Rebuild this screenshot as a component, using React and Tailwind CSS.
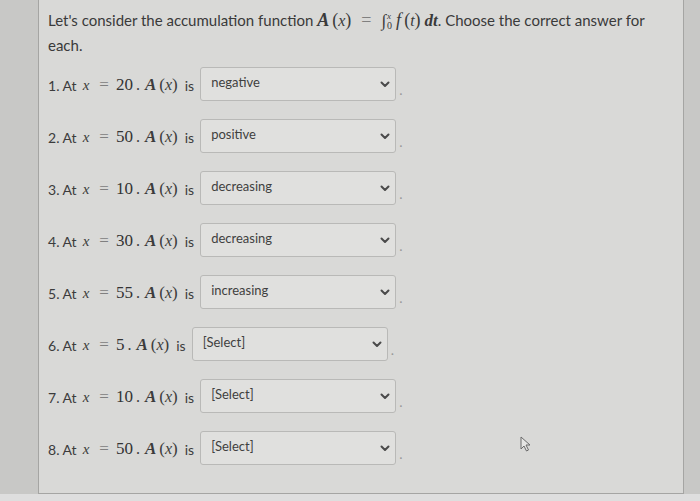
import React from "react";

const rows = [
  { n: "1", x: "20", v: "negative" },
  { n: "2", x: "50", v: "positive" },
  { n: "3", x: "10", v: "decreasing" },
  { n: "4", x: "30", v: "decreasing" },
  { n: "5", x: "55", v: "increasing" },
  { n: "6", x: "5", v: "[Select]" },
  { n: "7", x: "10", v: "[Select]" },
  { n: "8", x: "50", v: "[Select]" },
];

const serif = { fontFamily: '"Liberation Serif", "DejaVu Serif", serif' };

function MathAx() {
  return (
    <span className="inline-flex items-baseline" style={serif}>
      <span className="italic font-bold text-[17px]">A</span>
      <span className="ml-[3px] text-[17px]">(</span>
      <span className="italic text-[16px]">x</span>
      <span className="text-[17px]">)</span>
    </span>
  );
}

function Chevron() {
  return (
    <svg width="10" height="7" viewBox="0 0 10 7" className="shrink-0">
      <path d="M1.5 1.5 L5 5 L8.5 1.5" fill="none" stroke="#4a4a4a" strokeWidth="2" strokeLinecap="round" strokeLinejoin="round" />
    </svg>
  );
}

function Row({ n, x, v }) {
  return (
    <div className="flex items-center h-[34px] text-[14px] text-[#3c3c3c]">
      <span>{n}. At</span>
      <span className="italic ml-[6px] text-[15px]" style={serif}>x</span>
      <span className="ml-[10px] text-[#808080] text-[17px]" style={serif}>=</span>
      <span className="ml-[7px] text-[17px] text-[#333]" style={serif}>{x}</span>
      <span className="ml-[3px] text-[16px]" style={serif}>.</span>
      <span className="ml-[5px]"><MathAx /></span>
      <span className="ml-[7px]">is</span>
      <div className="ml-[6px] w-[196px] h-[34px] flex items-center justify-between pl-[10px] pr-[5px] bg-[#e0e0de] border border-[#b9b9b7] rounded-[3px] -mt-[2px]">
        <span className="text-[13px] text-[#404040] -mt-[3px]">{v}</span>
        <Chevron />
      </div>
      <span className="ml-[3px] mt-[8px] text-[#999]">.</span>
    </div>
  );
}

export default function App() {
  return (
    <div
      className="relative w-[700px] h-[501px] overflow-hidden bg-[#c8c8c6]"
      style={{ fontFamily: 'Lato, "Open Sans", sans-serif' }}
    >
      <div className="ml-[38px] w-[646px] h-[494px] bg-[#d9d9d7] border-l border-r border-b border-[#a5a5a3] pl-[9px] pt-[8px]">
        <div className="w-[620px] text-[15px] leading-[24px] text-[#3a3a3a]">
          Let's consider the accumulation function{" "}
          <span className="inline-flex items-baseline" style={serif}>
            <span className="italic font-bold text-[18px]">A</span>
            <span className="ml-[3px] text-[18px]">(</span>
            <span className="italic text-[16px]">x</span>
            <span className="text-[18px]">)</span>
            <span className="mx-[10px] text-[#808080] text-[18px]">=</span>
            <span className="italic text-[17px]">∫</span>
            <span className="self-center inline-flex flex-col leading-[9px] ml-[1px] mt-[1px]">
              <span className="italic text-[9px]">x</span>
              <span className="text-[10px]">0</span>
            </span>
            <span className="ml-[4px] italic text-[18px]">f</span>
            <span className="ml-[3px] text-[18px]">(</span>
            <span className="italic text-[16px]">t</span>
            <span className="text-[18px]">)</span>
            <span className="ml-[4px] italic font-bold text-[17px]">dt</span>
          </span>
          . Choose the correct answer for each.
        </div>
        <div className="mt-[11px] flex flex-col gap-[18px]">
          {rows.map((r) => (
            <Row key={r.n} {...r} />
          ))}
        </div>
      </div>
      <div className="h-[7px] bg-[#dedede]" />
      <svg className="absolute" style={{ left: "520px", top: "436px" }} width="12" height="16" viewBox="0 0 12 16">
        <path d="M1 1 L1 13 L4 10 L6.5 15 L8.5 14 L6 9 L10 9 Z" fill="#e6e6e4" stroke="#6a6a6a" strokeWidth="1" strokeLinejoin="round" />
      </svg>
    </div>
  );
}
